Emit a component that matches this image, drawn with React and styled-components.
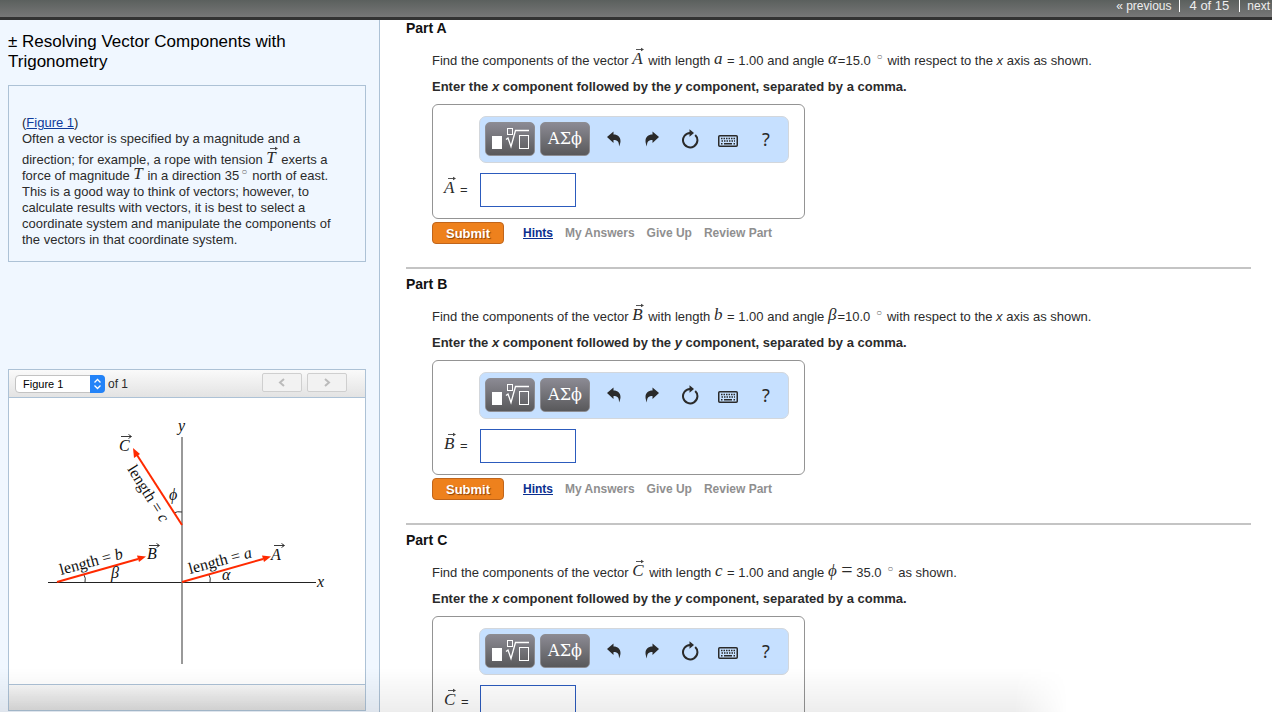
import styled, { createGlobalStyle } from "styled-components";

const GlobalStyle = createGlobalStyle`
  * {
    box-sizing: border-box;
  }

  body {
    margin: 0;
    background: #fff;
    color: #2b2b2b;
    font-family: "Liberation Sans", Arial, sans-serif;
    font-size: 13px;
    line-height: 16px;
  }

  button, input, select {
    font-family: inherit;
  }
`;

const Page = styled.div`
  position: relative;
  display: flex;
  flex-direction: column;
  height: 100vh;
  overflow: hidden;
`;

const BottomShade = styled.div`
  position: absolute;
  left: 0;
  right: 16%;
  bottom: 0;
  height: 44px;
  pointer-events: none;
  background: linear-gradient(to bottom, rgba(0, 0, 0, 0), rgba(0, 0, 0, 0.07));
  mask-image: linear-gradient(to right, #000 95%, transparent);
`;

const TopBar = styled.header`
  display: flex;
  justify-content: flex-end;
  flex: 0 0 20px;
  overflow: hidden;
  border-bottom: 3px solid #333;
  background: linear-gradient(to bottom, #5b605e, #777);
`;

const Pager = styled.nav`
  display: flex;
  align-items: flex-start;
  height: 12px;
  line-height: 12px;
  color: #eee;
`;

const PagerItem = styled.span`
  padding: 0 ${({ $wide }) => ($wide ? "10px" : "7px")};
  border-left: ${({ $divided }) => ($divided ? "1px solid #fff" : "none")};

  &:last-child {
    padding-right: 2px;
  }
`;

const PagerLink = styled.a`
  color: inherit;
  font-size: 12px;
  text-decoration: none;
`;

const Columns = styled.div`
  display: flex;
  flex: 1;
  min-height: 0;
`;

const Sidebar = styled.aside`
  display: flex;
  flex-direction: column;
  flex: 0 0 380px;
  padding: 12px 13px 1px 8px;
  border-right: 1px solid #adc2d6;
  background: #f0f7ff;
`;

const Title = styled.h1`
  margin: 0 0 13px;
  color: #000;
  font-size: 17px;
  font-weight: normal;
  line-height: 20px;
`;

const Intro = styled.section`
  padding: 29px 28px 13px 13px;
  border: 1px solid #adc2d6;
`;

const IntroLine = styled.p`
  margin: 0;
`;

const FigureLink = styled.a`
  color: #0f3b9c;
`;

const FigurePanel = styled.section`
  margin-top: auto;
  border: 1px solid #adc2d6;
  background: #fff;
`;

const FigureBar = styled.div`
  display: flex;
  align-items: center;
  height: 28px;
  padding: 0 18px 0 6px;
  border-bottom: 1px solid #adc2d6;
  background: linear-gradient(to bottom, #fafafa, #e3e3e3);
`;

const FigureFooter = styled.div`
  height: 26px;
  border-top: 1px solid #adc2d6;
  background: linear-gradient(to bottom, #f8f8f8, #e0e0e0);
`;

const PickerWrap = styled.label`
  position: relative;
  display: flex;
  margin-right: 3px;
`;

const Picker = styled.select`
  appearance: none;
  width: 90px;
  height: 18px;
  padding: 0 16px 0 7px;
  border: 1px solid #c3c3c3;
  border-radius: 4px;
  background: #fff;
  color: #000;
  font-size: 11px;
`;

const PickerArrows = styled.svg`
  position: absolute;
  top: 0;
  right: 0;
  pointer-events: none;
`;

const PickerCount = styled.span`
  font-size: 12px;
`;

const PagingButtons = styled.div`
  display: flex;
  gap: 5px;
  margin: 0 0 3px auto;
`;

const PagingButton = styled.button`
  display: flex;
  align-items: center;
  justify-content: center;
  width: 40px;
  height: 19px;
  padding: 0;
  border: 1px solid #cfcfcf;
  border-radius: 2px;
  background: #f2f2f2;
`;

const Diagram = styled.svg`
  display: block;
  width: 100%;
  height: 286px;
`;

const Main = styled.main`
  flex: 1;
  min-width: 0;
  padding: 0 21px 0 26px;
`;

const PartSection = styled.section`
  height: 256px;
  border-top: 2px solid ${({ $first }) => ($first ? "transparent" : "#c4c4c4")};
  margin-top: ${({ $first }) => ($first ? "-9px" : "0")};
  padding-top: 6px;
`;

const PartTitle = styled.h2`
  margin: 0 0 14px;
  color: #111;
  font-size: 14px;
  font-weight: bold;
  line-height: 18px;
`;

const PartBody = styled.div`
  padding-left: 26px;
`;

const Question = styled.p`
  margin: 0 0 8px;
  line-height: 20px;
`;

const Instruction = styled.p`
  margin: 0 0 9px;
  font-weight: bold;
  line-height: 16px;
`;

const Math = styled.i`
  margin-right: 1px;
  font-family: "Liberation Serif", "Times New Roman", serif;
  font-size: 17px;
  line-height: 12px;
  vertical-align: 1px;
`;

const MathSign = styled.span`
  font-family: "Liberation Serif", "Times New Roman", serif;
  font-size: 20px;
  line-height: 12px;
`;

const VectorBox = styled.span`
  position: relative;
  display: inline-block;
  margin-right: 1px;
  padding-top: ${({ $tall }) => ($tall ? "5px" : "0")};
  line-height: 12px;
`;

const VectorArrow = styled.svg`
  position: absolute;
  top: ${({ $tall }) => ($tall ? "-1px" : "-6px")};
  left: 4px;
`;

const Degree = styled.sup`
  margin: 0 5px 0 2px;
  color: #666;
  font-size: 10px;
  line-height: 0;
`;

const AnswerBox = styled.div`
  width: 373px;
  height: 115px;
  padding: 11px 15px 11px 11px;
  border: 1px solid #949494;
  border-radius: 6px;
`;

const Toolbar = styled.div`
  display: flex;
  align-items: center;
  height: 47px;
  margin: 0 0 10px 35px;
  padding: 0 3px 2px 5px;
  border: 1px solid #d3d7dc;
  border-radius: 7px;
  background: #c6e0ff;
`;

const PaletteButton = styled.button`
  display: flex;
  align-items: center;
  justify-content: center;
  width: 50px;
  height: 34px;
  margin-right: 5px;
  padding: 0;
  border: 1px solid #8d8d92;
  border-radius: 5px;
  background: linear-gradient(to bottom, #8b8a93, #59595b);
  color: #fff;
  font-family: "DejaVu Serif", serif;
  font-size: 16px;
`;

const ToolButton = styled.button`
  display: flex;
  align-items: center;
  justify-content: center;
  flex: 1;
  height: 34px;
  padding: 0;
  border: none;
  background: none;
  color: #2a2a2a;
  font-family: "Noto Sans", sans-serif;
  font-size: 18px;
`;

const AnswerLabel = styled.label`
  display: flex;
  align-items: center;
`;

const AnswerName = styled.span`
  width: 36px;
  font-size: 13px;
`;

const AnswerInput = styled.input`
  width: 96px;
  height: 34px;
  border: 1px solid #2c5bbd;
  background: #fff;
`;

const Actions = styled.div`
  display: flex;
  align-items: center;
  gap: 12px;
  margin-top: 3px;
  font-size: 12px;
  font-weight: bold;
`;

const SubmitButton = styled.button`
  width: 72px;
  height: 22px;
  margin-right: 7px;
  padding: 0;
  border: 1px solid #c0651b;
  border-radius: 4px;
  background: #ee811d;
  color: #fff;
  font-size: 13px;
  font-weight: bold;
  text-shadow: 1px 1px 1px #8a4208;
`;

const ActionLink = styled.a`
  color: ${({ $active }) => ($active ? "#0b2f8f" : "#8f8f8f")};
  text-decoration: ${({ $active }) => ($active ? "underline" : "none")};
`;

const Vector = ({ name, tall }) => (
  <VectorBox $tall={tall}>
    <Math>{name}</Math>
    <VectorArrow $tall={tall} width="8" height="5" viewBox="0 0 8 5">
      <path d="M0 2.5H6" stroke="#555" fill="none" />
      <path d="M5 .7L8 2.5L5 4.3Z" fill="#444" />
    </VectorArrow>
  </VectorBox>
);

const TemplateIcon = () => (
  <svg width="38" height="24" viewBox="0 0 38 24" fill="none" stroke="#fff">
    <rect x="1" y="9" width="10" height="13" fill="#fff" stroke="none" />
    <rect x="16.5" y="1.5" width="5" height="6" />
    <path d="M15 12.5L17 11L20 19.5L24.5 3.5H38" strokeWidth="1.3" />
    <rect x="28.5" y="8.5" width="9" height="13" />
  </svg>
);

const UndoIcon = () => (
  <svg width="16" height="16" viewBox="0 0 16 16">
    <path d="M1 6L7.5 .5V3.5C13.5 3.5 16.5 8.5 13 15.5C13.2 10.8 11.5 9 7.5 9V12Z" fill="#2a2a2a" />
  </svg>
);

const RedoIcon = () => (
  <svg width="16" height="16" viewBox="0 0 16 16">
    <path d="M15 6L8.5 .5V3.5C2.500 3.5 -.5 8.5 3 15.500C2.800 10.800 4.500 9 8.5 9V12Z" fill="#2a2a2a" />
  </svg>
);

const ResetIcon = () => (
  <svg width="18" height="20" viewBox="0 0 18 20">
    <path d="M14.200 6A7.200 7.200 0 1 1 9 4" fill="none" stroke="#2a2a2a" strokeWidth="2" />
    <path d="M8.500 .3L13 4L8.500 7.700Z" fill="#2a2a2a" />
  </svg>
);

const KeyboardIcon = () => (
  <svg width="20" height="16" viewBox="0 0 20 16">
    <rect x=".75" y="4.75" width="18.5" height="10.5" rx="1" fill="none" stroke="#2a2a2a" strokeWidth="1.5" />
    <path d="M3 7.500H17M3.5 10H17" stroke="#2a2a2a" strokeWidth="1.5" strokeDasharray="1.5 1" />
    <path d="M3 12.700H4.5M6 12.700H14M15.5 12.700H17" stroke="#2a2a2a" strokeWidth="1.5" />
  </svg>
);

const parts = [
  { id: "A", length: "a", angle: "α", value: "15.0", axis: true },
  { id: "B", length: "b", angle: "β", value: "10.0", axis: true },
  { id: "C", length: "c", angle: "ϕ", value: "35.0", axis: false },
];

const Part = ({ part, first }) => (
  <PartSection $first={first}>
    <PartTitle>Part {part.id}</PartTitle>
    <PartBody>
      <Question>
        Find the components of the vector <Vector name={part.id} /> with length{" "}
        <Math>{part.length}</Math> = 1.00 and angle <Math>{part.angle}</Math>
        {part.axis ? (
          "="
        ) : (
          <>
            {" "}
            <MathSign>=</MathSign>{" "}
          </>
        )}
        {part.value} <Degree>○</Degree>
        {part.axis ? (
          <>
            with respect to the <i>x</i> axis as shown.
          </>
        ) : (
          "as shown."
        )}
      </Question>
      <Instruction>
        Enter the <i>x</i> component followed by the <i>y</i> component, separated by a comma.
      </Instruction>
      <AnswerBox>
        <Toolbar>
          <PaletteButton type="button" aria-label="Templates">
            <TemplateIcon />
          </PaletteButton>
          <PaletteButton type="button">ΑΣϕ</PaletteButton>
          <ToolButton type="button" aria-label="Undo">
            <UndoIcon />
          </ToolButton>
          <ToolButton type="button" aria-label="Redo">
            <RedoIcon />
          </ToolButton>
          <ToolButton type="button" aria-label="Reset">
            <ResetIcon />
          </ToolButton>
          <ToolButton type="button" aria-label="Keyboard shortcuts">
            <KeyboardIcon />
          </ToolButton>
          <ToolButton type="button">?</ToolButton>
        </Toolbar>
        <AnswerLabel>
          <AnswerName>
            <Vector name={part.id} /> =
          </AnswerName>
          <AnswerInput type="text" />
        </AnswerLabel>
      </AnswerBox>
      <Actions>
        <SubmitButton type="button">Submit</SubmitButton>
        <ActionLink href="#hints" $active>
          Hints
        </ActionLink>
        <ActionLink href="#answers">My Answers</ActionLink>
        <ActionLink href="#give-up">Give Up</ActionLink>
        <ActionLink href="#review">Review Part</ActionLink>
      </Actions>
    </PartBody>
  </PartSection>
);

// Origin of the axes is at (173, 184)
const VectorDiagram = () => (
  <Diagram viewBox="0 0 356 286" fontFamily="Liberation Serif, serif" fontSize="16" fill="#111">
    <path d="M39 184.5H307" stroke="#222" />
    <path d="M173 39V266" stroke="#777" strokeWidth="1.5" />
    <g stroke="#333" fill="none">
      <path d="M76 184Q77 180 75 177" />
      <path d="M201 184Q202 180 200 177" />
      <path d="M165 115Q168 113 173 114" />
    </g>
    <g stroke="#ff2a00" strokeWidth="2">
      <path d="M48 184L129 161" />
      <path d="M173 184L254 161" />
      <path d="M173 127L128 57" />
    </g>
    <g fill="#ff2a00">
      <path d="M137 158.5L128 157.5L130 164Z" />
      <path d="M262 158.5L253 157.5L255 164Z" />
      <path d="M124 50L125 60L131 56Z" />
    </g>
    <g stroke="#222" fill="none" strokeWidth=".9">
      <path d="M112 38.5H122M119.5 36.5L122.5 38.5L119.5 40.5" />
      <path d="M140 147.5H150M147.5 145.5L150.5 147.5L147.5 149.5" />
      <path d="M265 147.5H275M272.5 145.5L275.5 147.5L272.5 149.5" />
    </g>
    <g fontStyle="italic">
      <text x="169" y="33">y</text>
      <text x="308" y="189">x</text>
      <text x="110" y="53">C</text>
      <text x="138" y="161">B</text>
      <text x="262" y="162">A</text>
      <text x="102" y="180">β</text>
      <text x="213" y="182">α</text>
      <text x="160" y="102">ϕ</text>
    </g>
    <text transform="translate(52 177) rotate(-15)">
      length = <tspan fontStyle="italic">b</tspan>
    </text>
    <text transform="translate(181 176) rotate(-15)">
      length = <tspan fontStyle="italic">a</tspan>
    </text>
    <text transform="translate(118 71) rotate(58)">
      length = <tspan fontStyle="italic">c</tspan>
    </text>
  </Diagram>
);

export default function App() {
  return (
    <Page>
      <GlobalStyle />
      <TopBar>
        <Pager>
          <PagerItem>
            <PagerLink href="#previous">« previous</PagerLink>
          </PagerItem>
          <PagerItem $divided $wide>
            4 of 15
          </PagerItem>
          <PagerItem $divided>
            <PagerLink href="#next">next</PagerLink>
          </PagerItem>
        </Pager>
      </TopBar>
      <Columns>
        <Sidebar>
          <Title>± Resolving Vector Components with Trigonometry</Title>
          <Intro>
            <IntroLine>
              (<FigureLink href="#figure">Figure 1</FigureLink>)
            </IntroLine>
            <IntroLine>
              Often a vector is specified by a magnitude and a direction; for example, a rope with tension{" "}
              <Vector name="T" tall /> exerts a force of magnitude <Math>T</Math> in a direction 35
              <Degree>○</Degree>north of east. This is a good way to think of vectors; however, to calculate
              results with vectors, it is best to select a coordinate system and manipulate the components of
              the vectors in that coordinate system.
            </IntroLine>
          </Intro>
          <FigurePanel id="figure">
            <FigureBar>
              <PickerWrap>
                <Picker aria-label="Figure">
                  <option>Figure 1</option>
                </Picker>
                <PickerArrows width="15" height="18" viewBox="0 0 15 18">
                  <path d="M0 0H11Q15 0 15 4V14Q15 18 11 18H0Z" fill="#2383f8" />
                  <path
                    d="M4.5 7.5L7.5 4.5L10.5 7.5M4.5 10.5L7.5 13.5L10.5 10.5"
                    fill="none"
                    stroke="#fff"
                    strokeWidth="1.3"
                  />
                </PickerArrows>
              </PickerWrap>
              <PickerCount>of 1</PickerCount>
              <PagingButtons>
                <PagingButton type="button" aria-label="Previous figure">
                  <svg width="8" height="9" viewBox="0 0 8 9">
                    <path d="M6 1L2 4.5L6 8" fill="none" stroke="#bbb" strokeWidth="2" />
                  </svg>
                </PagingButton>
                <PagingButton type="button" aria-label="Next figure">
                  <svg width="8" height="9" viewBox="0 0 8 9">
                    <path d="M2 1L6 4.5L2 8" fill="none" stroke="#bbb" strokeWidth="2" />
                  </svg>
                </PagingButton>
              </PagingButtons>
            </FigureBar>
            <VectorDiagram />
            <FigureFooter />
          </FigurePanel>
        </Sidebar>
        <Main>
          {parts.map((part, index) => (
            <Part key={part.id} part={part} first={index === 0} />
          ))}
        </Main>
      </Columns>
      <BottomShade />
    </Page>
  );
}
